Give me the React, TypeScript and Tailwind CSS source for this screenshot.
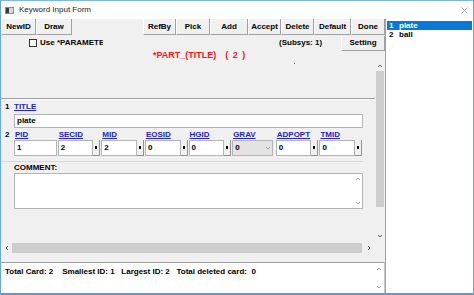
import React from 'react';

const font = "font-['Liberation_Sans',Arial,sans-serif]";

function Chevron({ dir, className = '' }: { dir: 'up' | 'down' | 'left' | 'right'; className?: string }) {
  const d = {
    up: 'M1 4 L3 2 L5 4',
    down: 'M1 2 L3 4 L5 2',
    left: 'M4 1 L2 3 L4 5',
    right: 'M2 1 L4 3 L2 5',
  }[dir];
  return (
    <svg width="6" height="6" viewBox="0 0 6 6" className={className}>
      <path d={d} fill="none" stroke="currentColor" strokeWidth="1" />
    </svg>
  );
}

function ToolButton({ label, w }: { label: string; w: string }) {
  return (
    <div
      className={`${w} h-[16px] flex items-center justify-center bg-[#f0f0f0] border-r border-b border-[#a0a0a0] border-l border-l-white text-[8px] font-bold text-black`}
    >
      {label}
    </div>
  );
}

const fields = [
  { label: 'PID', value: '1', kind: 'plain' },
  { label: 'SECID', value: '2', kind: 'btn' },
  { label: 'MID', value: '2', kind: 'btn' },
  { label: 'EOSID', value: '0', kind: 'btn' },
  { label: 'HGID', value: '0', kind: 'btn' },
  { label: 'GRAV', value: '0', kind: 'select' },
  { label: 'ADPOPT', value: '0', kind: 'btn' },
  { label: 'TMID', value: '0', kind: 'btn' },
];

function DotButton() {
  return (
    <div className="w-[7px] h-[16px] bg-[#f0f0f0] border-r border-b border-[#909090] flex items-center justify-center">
      <div className="w-[2px] h-[3px] bg-black" />
    </div>
  );
}

export default function App() {
  return (
    <div
      className={`${font} w-[474px] h-[295px] bg-white flex flex-col border-t border-l border-r border-b-2 border-t-[#7fb6e3] border-l-[#6aa8dc] border-r-[#6aa8dc] border-b-[#5a9bd4] overflow-hidden`}
    >
      {/* title bar */}
      <div className="h-[18px] flex items-center shrink-0">
        <div className="ml-[4px] w-[9px] h-[7px] border border-[#8a8a8a] bg-[#d8d8d8] flex items-center">
          <div className="w-[3px] h-[5px] bg-[#3a3a3a]" />
        </div>
        <span className="ml-[5px] text-[8px] text-[#222]">Keyword Input Form</span>
        <svg width="7" height="7" viewBox="0 0 7 7" className="ml-auto mr-[5px] text-[#9a9a9a]">
          <path d="M0.5 0.5 L6.5 6.5 M6.5 0.5 L0.5 6.5" stroke="currentColor" strokeWidth="0.8" />
        </svg>
      </div>

      <div className="flex flex-1 min-h-0">
        {/* left panel */}
        <div className="w-[384px] bg-[#f0f0f0] flex flex-col">
          {/* toolbar */}
          <div className="flex h-[16px] shrink-0">
            <ToolButton label="NewID" w="w-[35px]" />
            <ToolButton label="Draw" w="w-[36px]" />
            <div className="flex-1" />
            <ToolButton label="RefBy" w="w-[33px]" />
            <ToolButton label="Pick" w="w-[34px]" />
            <ToolButton label="Add" w="w-[38px]" />
            <ToolButton label="Accept" w="w-[33px]" />
            <ToolButton label="Delete" w="w-[33px]" />
            <ToolButton label="Default" w="w-[37px]" />
            <ToolButton label="Done" w="w-[34px]" />
          </div>

          {/* options row */}
          <div className="flex items-center h-[16px] shrink-0 text-[8px] font-bold">
            <div className="ml-[28px] w-[8px] h-[8px] border border-[#333] bg-white" />
            <span className="ml-[3px] w-[63px] overflow-hidden whitespace-nowrap">Use *PARAMETER</span>
            <span className="ml-[176px]">(Subsys: 1)</span>
            <div className="ml-auto w-[44px] h-[15px] flex items-center justify-center border-r border-b border-[#a0a0a0] border-l border-l-white">
              Setting
            </div>
          </div>

          {/* keyword name */}
          <div className="h-[10px] shrink-0 flex items-center text-[9px] font-bold text-[#e8202a]">
            <span className="ml-[152px]">*PART_(TITLE)</span>
            <span className="ml-[9px] tracking-[1px] whitespace-pre">( 2 )</span>
          </div>

          {/* scroll region */}
          <div className="flex flex-1 min-h-0">
            <div className="flex-1 flex flex-col">
              <div className="h-[37px] shrink-0 relative">
                <div className="absolute left-[293px] top-[2px] w-[1px] h-[1px] bg-[#5a6fa8]" />
              </div>
              <div className="h-[1px] bg-[#a0a0a0] shrink-0" />
              <div className="h-[1px] bg-white shrink-0" />

              <div className="flex flex-col text-[8px] font-bold">
                <div className="flex items-center h-[11px] mt-[1px]">
                  <span className="ml-[4px] w-[9px]">1</span>
                  <span className="text-[#2424c8] underline">TITLE</span>
                </div>
                <div className="ml-[13px] w-[349px] h-[14px] mt-[2px] bg-white border border-[#b4b4b4] flex items-center pl-[2px]">
                  plate
                </div>
                <div className="flex items-center h-[11px] mt-[1px]">
                  <span className="ml-[4px] w-[9px]">2</span>
                  <div className="grid grid-cols-8 w-[349px]">
                    {fields.map(f => (
                      <span key={f.label} className="pl-[1px] text-[#2424c8] underline">
                        {f.label}
                      </span>
                    ))}
                  </div>
                </div>
                <div className="ml-[13px] grid grid-cols-8 w-[349px] h-[16px]">
                  {fields.map(f => (
                    <div key={f.label} className="flex pr-[1px]">
                      {f.kind === 'select' ? (
                        <div className="flex-1 h-[16px] bg-[#e3e3e3] border border-[#b4b4b4] flex items-center pl-[2px] mr-[2px]">
                          <span>0</span>
                          <Chevron dir="down" className="ml-auto mr-[1px] text-[#a8a8a8]" />
                        </div>
                      ) : (
                        <>
                          <div className="flex-1 h-[16px] bg-white border border-[#b4b4b4] flex items-center pl-[2px]">
                            {f.value}
                          </div>
                          {f.kind === 'btn' && <DotButton />}
                        </>
                      )}
                    </div>
                  ))}
                </div>
                <div className="h-[1px] bg-[#d8d8d8] mt-[5px] w-[362px]" />
                <div className="h-[10px] flex items-center ml-[13px] mt-[1px]">COMMENT:</div>
                <div className="ml-[13px] w-[349px] h-[36px] bg-white border border-[#b4b4b4] flex justify-end">
                  <div className="w-[9px] flex flex-col items-center justify-between py-[2px] text-[#b8b8b8]">
                    <Chevron dir="up" />
                    <Chevron dir="down" />
                  </div>
                </div>
              </div>

              {/* horizontal scrollbar */}
              <div className="mt-auto mb-[9px] h-[10px] flex items-center shrink-0">
                <div className="w-[11px] flex justify-center text-[#606060]">
                  <Chevron dir="left" />
                </div>
                <div className="w-[350px] h-[10px] bg-[#cdcdcd]" />
                <div className="flex-1 flex justify-center text-[#606060]">
                  <Chevron dir="right" />
                </div>
              </div>
            </div>

            {/* vertical scrollbar */}
            <div className="w-[10px] flex flex-col items-center pb-[21px]">
              <div className="h-[10px] flex items-center text-[#606060]">
                <Chevron dir="up" />
              </div>
              <div className="w-[8px] h-[136px] bg-[#cdcdcd]" />
              <div className="mt-auto h-[10px] flex items-center text-[#606060]">
                <Chevron dir="down" />
              </div>
            </div>
          </div>

          {/* status */}
          <div className="h-[31px] shrink-0 bg-white border-t border-[#a0a0a0] border-r border-r-[#c8c8c8] flex">
            <div className="flex-1 pl-[4px] pt-[3px] text-[8px] font-bold whitespace-pre">
              Total Card: 2    Smallest ID: 1   Largest ID: 2   Total deleted card:  0
            </div>
            <div className="w-[10px] flex flex-col items-center justify-between py-[3px] text-[#b0b0b0]">
              <Chevron dir="up" />
              <Chevron dir="down" />
            </div>
          </div>
        </div>

        {/* list */}
        <div className="flex-1 border-l border-[#a0a0a0] bg-white pt-[2px] text-[8px] font-bold">
          <div className="mx-[1px] h-[9px] bg-[#0a78d8] text-white flex items-center">
            <span className="ml-[2px] w-[10px]">1</span>
            <span>plate</span>
          </div>
          <div className="mx-[1px] h-[9px] flex items-center">
            <span className="ml-[2px] w-[10px]">2</span>
            <span>ball</span>
          </div>
        </div>
      </div>
    </div>
  );
}
